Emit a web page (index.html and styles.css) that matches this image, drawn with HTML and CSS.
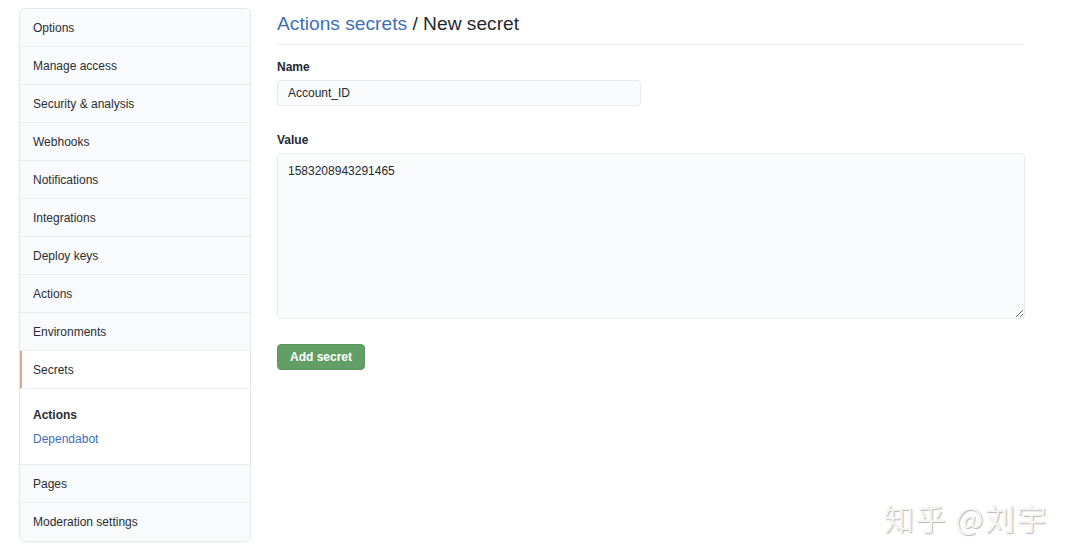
FILE: index.html
```html
<!DOCTYPE html>
<html lang="en">
<head>
<meta charset="utf-8">
<title>Actions secrets / New secret</title>
<link rel="stylesheet" href="styles.css">
</head>
<body>
<div class="layout">
  <nav class="menu">
    <a class="menu-item">Options</a>
    <a class="menu-item">Manage access</a>
    <a class="menu-item">Security &amp; analysis</a>
    <a class="menu-item">Webhooks</a>
    <a class="menu-item">Notifications</a>
    <a class="menu-item">Integrations</a>
    <a class="menu-item">Deploy keys</a>
    <a class="menu-item">Actions</a>
    <a class="menu-item">Environments</a>
    <a class="menu-item selected">Secrets</a>
    <div class="menu-group">
      <div class="group-title">Actions</div>
      <a class="group-link">Dependabot</a>
    </div>
    <a class="menu-item">Pages</a>
    <a class="menu-item last">Moderation settings</a>
  </nav>
  <main class="content">
    <div class="subhead">
      <h2 class="subhead-heading"><a class="crumb">Actions secrets</a> / New secret</h2>
    </div>
    <form class="form">
      <div class="form-group">
        <label class="label">Name</label>
        <input class="input" type="text" value="Account_ID">
      </div>
      <div class="form-group">
        <label class="label">Value</label>
        <textarea class="textarea">1583208943291465</textarea>
      </div>
      <button class="btn" type="button">Add secret</button>
    </form>
  </main>
</div>
<div class="watermark">知乎 @刘宇</div>
</body>
</html>
```

FILE: styles.css
```css
html, body {
  margin: 0;
  padding: 0;
  background: #ffffff;
}
body {
  font-family: "Liberation Sans", Arial, sans-serif;
  font-size: 12px;
  color: #24292e;
  padding: 8px 0 0 19px;
  width: 1080px;
  height: 560px;
  box-sizing: border-box;
  overflow: hidden;
  position: relative;
}
.layout {
  display: flex;
  align-items: flex-start;
  gap: 26px;
}
.menu {
  width: 232px;
  box-sizing: border-box;
  border: 1px solid #e4e6ea;
  border-radius: 6px;
  display: flex;
  flex-direction: column;
  overflow: hidden;
  background: #fff;
}
.menu-item {
  display: flex;
  align-items: center;
  height: 38px;
  box-sizing: border-box;
  padding-left: 13px;
  background: #f9fafb;
  border-bottom: 1px solid #eceef1;
  color: #2a2e33;
  font-size: 12px;
}
.menu-item.last {
  border-bottom: none;
  height: 38px;
}
.menu-item.selected {
  background: #ffffff;
  border-left: 2px solid #dca690;
  padding-left: 11px;
  border-bottom-color: #f0f1f3;
}
.menu-group {
  background: #fff;
  padding: 19px 13px 0;
  height: 76px;
  box-sizing: border-box;
  border-bottom: 1px solid #eceef1;
  display: flex;
  flex-direction: column;
  gap: 10px;
}
.group-title {
  font-weight: bold;
  color: #2a2e33;
  line-height: 14px;
}
.group-link {
  color: #3e6fb8;
  line-height: 14px;
}
.content {
  width: 747px;
}
.subhead {
  border-bottom: 1px solid #eceef1;
  height: 37px;
  box-sizing: border-box;
}
.subhead-heading {
  margin: 0;
  font-weight: normal;
  font-size: 19.2px;
  line-height: 31px;
  color: #24292e;
}
.crumb {
  color: #3e6fb8;
}
.form {
  display: flex;
  flex-direction: column;
  align-items: flex-start;
  padding-top: 14px;
}
.form-group {
  display: flex;
  flex-direction: column;
  align-items: flex-start;
  margin-bottom: 26px;
  width: 100%;
}
.label {
  font-weight: bold;
  font-size: 12px;
  line-height: 16px;
  margin-bottom: 5px;
  color: #24292e;
}
.input {
  width: 364px;
  height: 26px;
  box-sizing: border-box;
  border: 1px solid #e8eaed;
  border-radius: 4px;
  background: #fafbfc;
  font-family: "Liberation Sans", Arial, sans-serif;
  font-size: 12px;
  color: #24292e;
  padding: 0 10px;
  outline: none;
}
.textarea {
  width: 748px;
  height: 166px;
  box-sizing: border-box;
  border: 1px solid #e8eaed;
  border-radius: 4px;
  background: #fafbfc;
  font-family: "Liberation Sans", Arial, sans-serif;
  font-size: 12px;
  line-height: 20px;
  color: #24292e;
  padding: 7px 10px;
  outline: none;
  resize: vertical;
}
.btn {
  width: 88px;
  height: 26px;
  border: 1px solid #5a9860;
  border-radius: 4px;
  background: #619f66;
  color: #ffffff;
  font-family: "Liberation Sans", Arial, sans-serif;
  font-weight: bold;
  font-size: 12px;
  padding: 0;
  margin-top: -1px;
}
.watermark {
  position: absolute;
  left: 884px;
  top: 497px;
  font-family: "Noto Sans CJK SC", sans-serif;
  font-size: 30px;
  line-height: 40px;
  color: #f4f4f4;
  text-shadow: 1px 1px 1px #b9b9b9;
  letter-spacing: 1.5px;
  white-space: nowrap;
}
```
